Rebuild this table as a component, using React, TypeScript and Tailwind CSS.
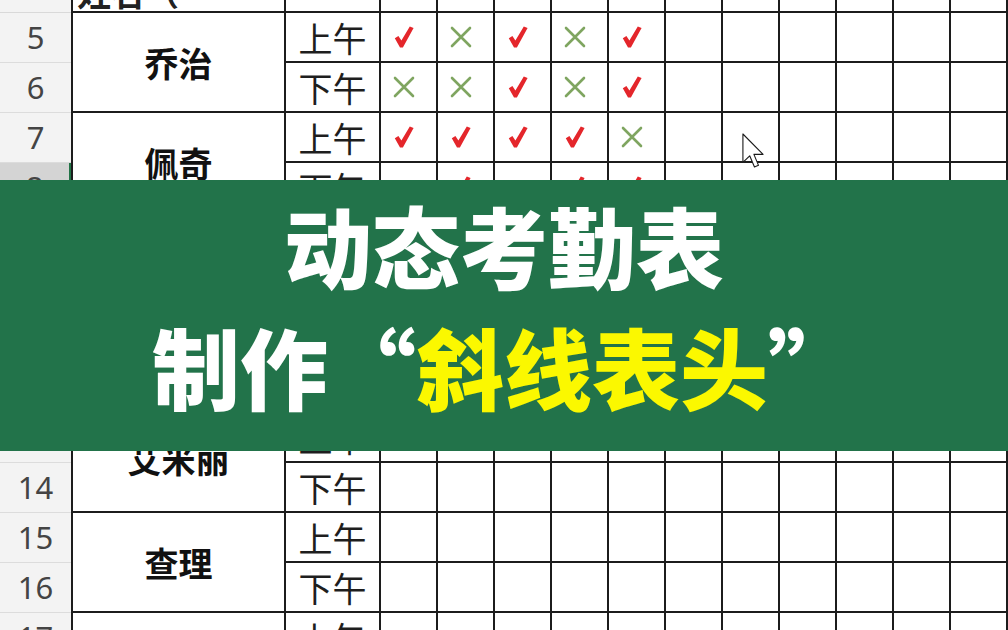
const marks: Record<number, string[]> = {
  5: ["v", "x", "v", "x", "v"],
  6: ["x", "x", "v", "x", "v"],
  7: ["v", "v", "v", "v", "x"],
  8: ["", "v", "", "v", "v"],
}

const names: Record<number, string> = {
  5: "乔治",
  7: "佩奇",
  9: "苏西",
  11: "丹尼",
  13: "艾米丽",
  15: "查理",
  17: "弗雷迪",
}

function Check() {
  return (
    <svg width="20" height="22" viewBox="0 0 20 22">
      <path d="M0.8 12.2 L4.4 10 L7.4 14.6 L15.8 0.6 L19.6 2 L8.9 21.6 L6 21.6 Z" fill="#e4262b" />
    </svg>
  )
}

function Cross() {
  return (
    <svg width="22" height="22" viewBox="0 0 22 22">
      <path d="M2 2 L20 20 M20 2 L2 20" stroke="#7fa560" strokeWidth="2.6" strokeLinecap="round" />
    </svg>
  )
}

function Cursor() {
  return (
    <svg width="22" height="35" viewBox="0 0 12 19">
      <path
        d="M0.5 0.5 L0.5 16 L4.2 12.4 L6.8 18.5 L9 17.6 L6.5 11.6 L11.5 11.6 Z"
        fill="#ffffff"
        stroke="#1a1a1a"
        strokeWidth="0.6"
        strokeLinejoin="round"
      />
    </svg>
  )
}

const line = "border-[#1c1c1c]"

export default function App() {
  const rows = [5, 6, 7, 8, 9, 10, 11, 12, 13, 14, 15, 16, 17]
  const days = Array.from({ length: 11 }, (_, i) => i)

  return (
    <div className="relative w-[1008px] h-[630px] overflow-hidden bg-white font-['Noto_Sans_CJK_SC',sans-serif]">
      {/* sheet */}
      <div className="grid grid-cols-[71px_215px_95px_repeat(11,57px)] grid-rows-[13px] auto-rows-[50px]">
        {/* row 4, mostly scrolled away */}
        <div className="col-start-1 bg-[#f3f3f3] border-b border-[#d9d9d9]" />
        <div className={`border-l-2 border-r-2 border-b-2 ${line} overflow-hidden flex items-end pl-[4px] pb-[2px]`}>
          <span className="text-[34px] leading-[34px] font-bold text-[#222]">姓名（</span>
        </div>
        <div className={`border-r-2 border-b-2 ${line}`} />
        {days.map((d) => (
          <div key={`r4-${d}`} className={`border-r-2 border-b-2 ${line}`} />
        ))}

        {rows.map((r) => (
          <Row key={r} r={r} days={days} />
        ))}
      </div>

      {/* title banner */}
      <div className="absolute inset-x-0 top-[180px] h-[271px] bg-[#22734a] flex flex-col items-center pt-[3px] font-['Noto_Sans_CJK_SC',sans-serif] font-black text-[88px] leading-[121px] text-white">
        <div>动态考勤表</div>
        <div>
          <span>制作“</span>
          <span className="text-[#fbf800]">斜线表头</span>
          <span>”</span>
        </div>
      </div>

      {/* mouse pointer */}
      <div className="absolute left-[742px] top-[133px]">
        <Cursor />
      </div>
    </div>
  )
}

function Row({ r, days }: { r: number; days: number[] }) {
  const selected = r === 8
  const m = marks[r] || []

  return (
    <>
      <div
        className={`col-start-1 flex items-center justify-center font-['Noto_Sans',sans-serif] text-[31px] text-[#444] border-b ${
          selected ? "bg-[#d4d4d4] border-[#c4c4c4] border-r-2 border-r-[#217346]" : "bg-[#f3f3f3] border-[#dcdcdc]"
        }`}
      >
        {r}
      </div>
      {names[r] !== undefined && (
        <div
          className={`row-span-2 border-l-2 border-r-2 border-b-2 ${line} flex items-center justify-center text-[34px] font-bold text-[#111] ${
            r === 13 ? "pb-[8px]" : ""
          }`}
        >
          {names[r]}
        </div>
      )}
      <div className={`border-r-2 border-b-2 ${line} flex items-center justify-center text-[34px] text-[#1e1e1e]`}>
        {r % 2 === 1 ? "上午" : "下午"}
      </div>
      {days.map((d) => (
        <div key={d} className={`border-r-2 border-b-2 ${line} flex items-center justify-center pr-[10px]`}>
          {m[d] === "v" && <Check />}
          {m[d] === "x" && <Cross />}
        </div>
      ))}
    </>
  )
}
